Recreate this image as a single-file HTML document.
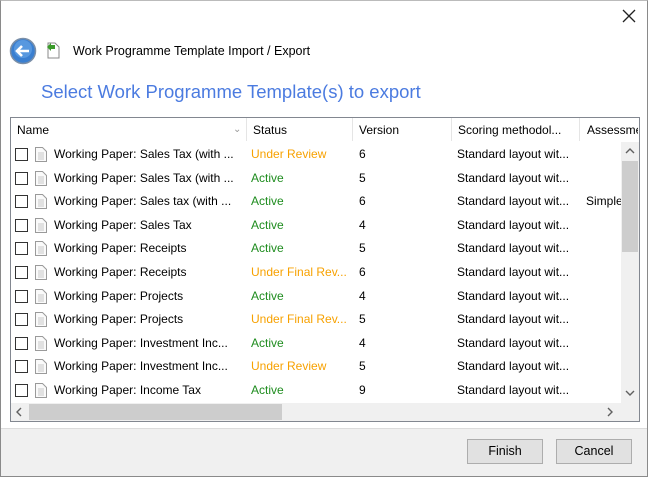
<!DOCTYPE html>
<html><head><style>
*{margin:0;padding:0;box-sizing:border-box}
body{width:650px;height:480px;background:#fff;font-family:"Liberation Sans",sans-serif;font-size:12px;color:#000;position:relative;overflow:hidden}
.a{position:absolute;white-space:nowrap}
.hd{position:absolute;top:118px;height:23px;line-height:24px;border-right:1px solid #e5e5e5}
.row{position:absolute;left:11px;width:610px;height:23px;line-height:25px}
.cb{position:absolute;left:4px;top:6px;width:13px;height:13px;border:1px solid #333;background:#fff}
.ic{position:absolute;left:24px;top:5px}
.o{color:#f7a100}.g{color:#1e8c1e}
.btn{position:absolute;top:439px;height:25px;width:76px;background:#e1e1e1;border:1px solid #adadad;text-align:center;line-height:23px;font-size:12.5px}
</style></head><body>
<div class="a" style="left:0;top:0;width:648px;height:477px;border:1px solid #8a8a8a;border-top-color:#bbb"></div>
<div class="a" style="left:1px;top:428px;width:646px;height:48px;background:#f0f0f0;border-top:1px solid #dcdcdc"></div>
<svg class="a" style="left:622px;top:9px" width="14" height="14"><path d="M1 1L13 13M13 1L1 13" stroke="#222" stroke-width="1.3"/></svg>
<svg class="a" style="left:9px;top:37px" width="28" height="28"><circle cx="14" cy="14" r="12.5" fill="#3a7fd0" stroke="#7a8fa8" stroke-width="1.5"/><circle cx="14" cy="12" r="9" fill="#6aa8ea" opacity=".6"/><path d="M20 14H9M13 9L8 14L13 19" stroke="#fff" stroke-width="2.6" fill="none"/></svg>
<svg class="a" style="left:45px;top:41px" width="16" height="18"><path d="M3 2h7l4 4v11H3z" fill="#fff" stroke="#888"/><path d="M2 6l4-4v2h4v4H6v2z" fill="#3a9a2a"/></svg>
<div class="a" style="left:73px;top:44px;font-size:12.5px">Work Programme Template Import / Export</div>
<div class="a" style="left:41px;top:81px;font-size:18.5px;color:#4b7be0">Select Work Programme Template(s) to export</div>
<div class="a" style="left:10px;top:117px;width:630px;height:305px;border:1px solid #828790;background:#fff"></div>
<div class="hd" style="left:11px;width:236px;padding-left:6px">Name<span style="position:absolute;left:222px;top:0;color:#999;font-size:10px">&#8964;</span></div>
<div class="hd" style="left:247px;width:106px;padding-left:6px">Status</div>
<div class="hd" style="left:353px;width:99px;padding-left:6px">Version</div>
<div class="hd" style="left:452px;width:128px;padding-left:6px">Scoring methodol...</div>
<div class="hd" style="left:580px;width:58px;padding-left:7px;overflow:hidden;border:none">Assessment</div>
<div id="rows"></div>
<div class="a" style="left:621px;top:142px;width:18px;height:261px;background:#f0f0f0"></div>
<div class="a" style="left:622px;top:161px;width:16px;height:91px;background:#cdcdcd"></div>
<svg class="a" style="left:625px;top:147px" width="10" height="8"><path d="M1 6L5 2L9 6" stroke="#606060" stroke-width="1.4" fill="none"/></svg>
<svg class="a" style="left:625px;top:389px" width="10" height="8"><path d="M1 2L5 6L9 2" stroke="#606060" stroke-width="1.4" fill="none"/></svg>
<div class="a" style="left:11px;top:403px;width:628px;height:18px;background:#f0f0f0"></div>
<div class="a" style="left:29px;top:404px;width:253px;height:16px;background:#cdcdcd"></div>
<svg class="a" style="left:15px;top:407px" width="8" height="10"><path d="M6 1L2 5L6 9" stroke="#606060" stroke-width="1.4" fill="none"/></svg>
<svg class="a" style="left:606px;top:407px" width="8" height="10"><path d="M2 1L6 5L2 9" stroke="#606060" stroke-width="1.4" fill="none"/></svg>
<div class="btn" style="left:467px">Finish</div>
<div class="btn" style="left:556px">Cancel</div>
<script>
var d=[["Working Paper: Sales Tax (with ...","o","Under Review",6,""],["Working Paper: Sales Tax (with ...","g","Active",5,""],["Working Paper: Sales tax (with ...","g","Active",6,"Simple"],["Working Paper: Sales Tax","g","Active",4,""],["Working Paper: Receipts","g","Active",5,""],["Working Paper: Receipts","o","Under Final Rev...",6,""],["Working Paper: Projects","g","Active",4,""],["Working Paper: Projects","o","Under Final Rev...",5,""],["Working Paper: Investment Inc...","g","Active",4,""],["Working Paper: Investment Inc...","o","Under Review",5,""],["Working Paper: Income Tax","g","Active",9,""]];
var h="";d.forEach(function(r,i){var t=142+i*23.6;
h+='<div class="row" style="top:'+t+'px"><div class="cb"></div><svg class="ic" width="12" height="15"><path d="M.5 .5h7l4 4v10H.5z" fill="#fafafa" stroke="#9a9a9a"/><path d="M3 6h6M3 8h6M3 10h6M3 12h6" stroke="#c8c8c8"/></svg><span class="a" style="left:43px">'+r[0]+'</span><span class="a '+r[1]+'" style="left:240px">'+r[2]+'</span><span class="a" style="left:348px">'+r[3]+'</span><span class="a" style="left:446px">Standard layout wit...</span><span class="a" style="left:575px;width:35px;overflow:hidden">'+r[4]+'</span></div>';});
document.getElementById("rows").innerHTML=h;
</script>
</body></html>
